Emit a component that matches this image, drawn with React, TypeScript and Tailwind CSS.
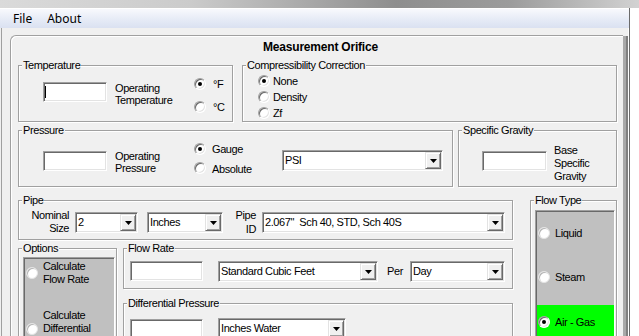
import React from "react";

const sunken =
  "border border-t-[#a0a0a0] border-l-[#a0a0a0] border-r-white border-b-white shadow-[inset_1px_1px_0_#696969,inset_-1px_-1px_0_#e3e3e3]";

function TextBox({ className = "", caret = false }: { className?: string; caret?: boolean }) {
  return (
    <div className={`${sunken} bg-white h-[20px] shrink-0 ${className}`}>
      {caret && <div className="ml-[1px] mt-[3px] h-[12px] w-px bg-black" />}
    </div>
  );
}

function Select({ text, className = "" }: { text: string; className?: string }) {
  return (
    <div className={`${sunken} flex h-[21px] shrink-0 items-center bg-white ${className}`}>
      <span className="flex-1 overflow-hidden whitespace-pre pl-[2px]">{text}</span>
      <div className="mr-px flex h-[17px] w-[16px] items-center justify-center border border-t-[#e3e3e3] border-l-[#e3e3e3] border-r-[#696969] border-b-[#696969] bg-[#f0f0f0] shadow-[inset_1px_1px_0_#fff,inset_-1px_-1px_0_#a0a0a0]">
        <svg width="7" height="4" viewBox="0 0 7 4">
          <path d="M0 0h7L3.5 4z" fill="#000" />
        </svg>
      </div>
    </div>
  );
}

function Radio({ checked = false, soft = false, className = "" }: { checked?: boolean; soft?: boolean; className?: string }) {
  const edge = soft
    ? "border border-[#e4e4e4] shadow-[inset_1px_1px_0_#b4b4b4]"
    : "border border-t-[#a0a0a0] border-l-[#a0a0a0] border-r-white border-b-white shadow-[inset_1px_1px_0_#696969,inset_-1px_-1px_0_#e3e3e3]";
  return (
    <div className={`flex h-[12px] w-[12px] shrink-0 items-center justify-center rounded-full bg-white ${edge} ${className}`}>
      {checked && <div className="h-[4px] w-[4px] rounded-full bg-black" />}
    </div>
  );
}

function Group({ label, className = "", children }: { label: string; className?: string; children?: React.ReactNode }) {
  return (
    <div className={`shrink-0 border border-[#a0a0a0] shadow-[inset_1px_1px_0_#fff,1px_1px_0_#fff] ${className}`}>
      <div className="-mb-[6px] -mt-[7px] ml-[3px] w-fit bg-[#f0f0f0] px-px leading-[13px]">{label}</div>
      {children}
    </div>
  );
}

const grayBox =
  "border border-t-[#a0a0a0] border-l-[#a0a0a0] border-r-white border-b-white bg-[#c0c0c0] shadow-[inset_1px_1px_0_#696969]";

export default function App() {
  return (
    <div className="h-[336px] w-[639px] overflow-hidden bg-white font-['Liberation_Sans',Arial,sans-serif] text-[11px] tracking-[-0.4px] text-black">
      <div className="h-[8px] bg-[linear-gradient(to_right,#dadada,#cbcbcb_30%,#8e8e8e_62%,#9c9c9c_80%,#d2d2d2)]" />
      <div className="w-[630px] border-r border-[#6b6b6b]">
        <div className="flex h-[20px] items-center border-t border-white bg-[linear-gradient(to_bottom,#f8f9fd,#e6ebf6_55%,#dae1f1)] font-['Noto_Sans',sans-serif] text-[12px] tracking-normal">
          <span className="ml-[13px]">File</span>
          <span className="ml-[15px]">About</span>
        </div>

        <div className="flex h-[308px] bg-[#f0f0f0]">
          <div className="ml-px w-[9px] border-l border-[#a0a0a0]" />

          <div className="mt-[7px] w-[613px] overflow-hidden rounded-tl-[6px] border-l border-t border-[#a0a0a0] pl-[7px] shadow-[inset_1px_1px_0_#fff]">
            <div className="mt-[2px] h-[18px] text-center text-[12px] font-bold leading-[18px] tracking-[-0.2px]">
              Measurement Orifice
            </div>

            {/* temperature / compressibility */}
            <div className="mt-[9px] flex">
              <Group label="Temperature" className="h-[57px] w-[215px]">
                <div className="flex items-start">
                  <TextBox caret className="ml-[24px] mt-[16px] w-[64px]" />
                  <div className="ml-[8px] mt-[16px] w-[79px] leading-[12px]">
                    Operating
                    <br />
                    Temperature
                  </div>
                  <div className="mt-[12px] flex flex-col">
                    <div className="flex h-[12px] items-center">
                      <Radio checked />
                      <span className="ml-[7px]">°F</span>
                    </div>
                    <div className="mt-[11px] flex h-[12px] items-center">
                      <Radio />
                      <span className="ml-[7px]">°C</span>
                    </div>
                  </div>
                </div>
              </Group>
              <Group label="Compressibility Correction" className="ml-[9px] h-[57px] w-[375px]">
                <div className="ml-[15px] mt-[9px] flex flex-col gap-[4px]">
                  <div className="flex h-[12px] items-center">
                    <Radio checked />
                    <span className="ml-[3px]">None</span>
                  </div>
                  <div className="flex h-[12px] items-center">
                    <Radio />
                    <span className="ml-[3px]">Density</span>
                  </div>
                  <div className="flex h-[12px] items-center">
                    <Radio />
                    <span className="ml-[3px]">Zf</span>
                  </div>
                </div>
              </Group>
            </div>

            {/* pressure / specific gravity */}
            <div className="mt-[8px] flex">
              <Group label="Pressure" className="h-[57px] w-[435px]">
                <div className="flex items-start">
                  <TextBox className="ml-[24px] mt-[20px] w-[64px]" />
                  <div className="ml-[8px] mt-[19px] w-[79px] leading-[12px]">
                    Operating
                    <br />
                    Pressure
                  </div>
                  <div className="mt-[12px] flex w-[88px] flex-col">
                    <div className="flex h-[12px] items-center">
                      <Radio checked />
                      <span className="ml-[6px]">Gauge</span>
                    </div>
                    <div className="mt-[7px] flex h-[12px] items-center">
                      <Radio />
                      <span className="ml-[6px] mt-[2px]">Absolute</span>
                    </div>
                  </div>
                  <Select text="PSI" className="mt-[19px] w-[161px]" />
                </div>
              </Group>
              <Group label="Specific Gravity" className="ml-[5px] h-[57px] w-[159px]">
                <div className="flex items-start">
                  <TextBox className="ml-[23px] mt-[20px] w-[65px]" />
                  <div className="ml-[7px] mt-[13px] leading-[13px]">
                    Base
                    <br />
                    Specific
                    <br />
                    Gravity
                  </div>
                </div>
              </Group>
            </div>

            <div className="mt-[13px] flex items-start">
              <div className="w-[495px] shrink-0">
                <Group label="Pipe" className="h-[40px] w-[495px]">
                  <div className="flex items-start">
                    <div className="mt-[8px] w-[50px] text-right leading-[13px]">
                      Nominal
                      <br />
                      Size
                    </div>
                    <Select text="2" className="ml-[6px] mt-[11px] w-[63px]" />
                    <Select text="Inches" className="ml-[9px] mt-[11px] w-[76px]" />
                    <div className="ml-[8px] mt-[7px] w-[25px] text-right leading-[14px]">
                      Pipe
                      <br />
                      ID
                    </div>
                    <Select text={'2.067"  Sch 40, STD, Sch 40S'} className="ml-[6px] mt-[11px] w-[243px]" />
                  </div>
                </Group>

                <div className="mt-[8px] flex items-start">
                  <Group label="Options" className="h-[120px] w-[99px]">
                    <div className={`ml-[4px] mt-[8px] h-[100px] w-[92px] ${grayBox}`}>
                      <div className="mt-[2px] flex items-center">
                        <Radio soft className="ml-[2px]" />
                        <div className="ml-[5px] leading-[13px]">
                          Calculate
                          <br />
                          Flow Rate
                        </div>
                      </div>
                      <div className="mt-[23px] flex items-center">
                        <Radio soft className="ml-[2px]" />
                        <div className="ml-[5px] leading-[13px]">
                          Calculate
                          <br />
                          Differential
                          <br />
                          Pressure
                        </div>
                      </div>
                    </div>
                  </Group>

                  <div className="ml-[6px]">
                    <Group label="Flow Rate" className="h-[41px] w-[390px]">
                      <div className="mt-[12px] flex h-[21px] items-center">
                        <TextBox className="ml-[6px] w-[73px] self-start" />
                        <Select text="Standard Cubic Feet" className="ml-[15px] w-[160px]" />
                        <span className="ml-[9px] w-[23px]">Per</span>
                        <Select text="Day" className="w-[95px]" />
                      </div>
                    </Group>
                    <Group label="Differential Pressure" className="mt-[14px] h-[60px] w-[390px]">
                      <div className="flex items-start">
                        <TextBox className="ml-[6px] mt-[15px] w-[73px]" />
                        <Select text="Inches Water" className="ml-[15px] mt-[14px] w-[128px]" />
                      </div>
                    </Group>
                  </div>
                </div>
              </div>

              <Group label="Flow Type" className="ml-[17px] h-[150px] w-[87px]">
                <div className={`ml-[4px] mt-[9px] h-[140px] w-[80px] ${grayBox}`}>
                  <div className="ml-px mt-[5px] flex h-[34px] w-[77px] items-center">
                    <Radio soft className="ml-px" />
                    <span className="ml-[5px]">Liquid</span>
                  </div>
                  <div className="ml-px mt-[10px] flex h-[34px] w-[77px] items-center">
                    <Radio soft className="ml-px" />
                    <span className="ml-[5px]">Steam</span>
                  </div>
                  <div className="ml-px mt-[11px] flex h-[34px] w-[77px] items-center bg-[#00ff00]">
                    <Radio checked className="ml-px" />
                    <span className="ml-[5px]">Air - Gas</span>
                  </div>
                </div>
              </Group>
            </div>
          </div>

          <div className="mt-[8px] w-[3px] bg-[#a9a9a9]" />
          <div className="mt-[8px] w-[2px] bg-[#808080]" />
          <div className="w-px bg-white" />
        </div>
      </div>
    </div>
  );
}
